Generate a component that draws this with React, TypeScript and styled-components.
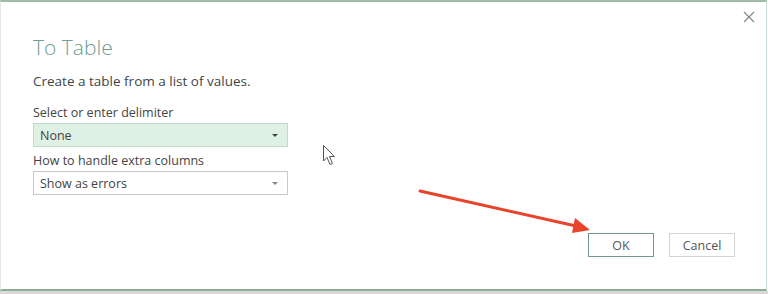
import styled, { createGlobalStyle } from "styled-components";

const GlobalStyle = createGlobalStyle`
  html, body {
    margin: 0;
    padding: 0;
    background: #f2f2f2;
  }
  body {
    font-family: "Open Sans", "Noto Sans", sans-serif;
    color: #444;
  }
`;

const Page = styled.div`
  width: 768px;
  height: 294px;
  overflow: hidden;
  background: linear-gradient(#fff 0, #fff 291px, #d9d9d9 291px);
`;

const Dialog = styled.div`
  position: relative;
  box-sizing: border-box;
  width: 767px;
  height: 291px;
  background: #fff;
  border-top: 2px solid #9dbba6;
  border-bottom: 2px solid #8fae99;
  border-right: 1px solid #c9ddd0;
  border-left: 1px solid #e6e6e6;
  display: flex;
  flex-direction: column;
  padding: 0 0 0 32px;
`;

const Close = styled.button`
  position: absolute;
  top: 8px;
  right: 10px;
  width: 14px;
  height: 14px;
  padding: 0;
  border: none;
  background: none;
  display: flex;
  align-items: center;
  justify-content: center;
`;

const Title = styled.h1`
  margin: 32px 0 0 0;
  font-family: "Open Sans", "Noto Sans", sans-serif;
  font-weight: 300;
  font-size: 21px;
  line-height: 26px;
  color: #6f9c93;
`;

const Description = styled.p`
  margin: 12px 0 0 0;
  font-size: 13.5px;
  line-height: 18px;
  color: #444;
`;

const Field = styled.div<{ $top: number }>`
  display: flex;
  flex-direction: column;
  gap: 2px;
  width: 255px;
  margin-top: ${(p) => p.$top}px;
`;

const Label = styled.label`
  font-size: 12.5px;
  line-height: 16px;
  color: #444;
`;

const Select = styled.div<{ $active?: boolean }>`
  box-sizing: border-box;
  height: 24px;
  display: flex;
  align-items: center;
  justify-content: space-between;
  padding: 0 9px 0 6px;
  font-size: 12.5px;
  color: #444;
  background: ${(p) => (p.$active ? "#dff0e4" : "#fff")};
  border: 1px solid ${(p) => (p.$active ? "#bcdcc6" : "#c8c8c8")};
`;

const Caret = styled.span<{ $active?: boolean }>`
  width: 0;
  height: 0;
  border-left: 3px solid transparent;
  border-right: 3px solid transparent;
  border-top: 3px solid ${(p) => (p.$active ? "#444" : "#888")};
`;

const Footer = styled.div`
  margin-top: auto;
  margin-bottom: 32px;
  display: flex;
  justify-content: flex-end;
  gap: 15px;
  padding-right: 31px;
`;

const Button = styled.button<{ $primary?: boolean }>`
  box-sizing: border-box;
  width: 66px;
  height: 24px;
  background: #fff;
  font-family: "Open Sans", "Noto Sans", sans-serif;
  font-size: 12.5px;
  color: #555;
  border: 1px solid ${(p) => (p.$primary ? "#6f9b84" : "#d4d4d4")};
  padding: 0;
`;

const Overlay = styled.svg`
  position: absolute;
  left: 0;
  top: 0;
  pointer-events: none;
`;

export default function App() {
  return (
    <>
      <GlobalStyle />
      <Page>
        <Dialog>
          <Close aria-label="Close">
            <svg width="12" height="12" viewBox="0 0 12 12">
              <path d="M1 1L11 11M11 1L1 11" stroke="#8a8a8a" strokeWidth="1.3" />
            </svg>
          </Close>
          <Title>To Table</Title>
          <Description>Create a table from a list of values.</Description>
          <Field $top={15}>
            <Label>Select or enter delimiter</Label>
            <Select $active>
              None
              <Caret $active />
            </Select>
          </Field>
          <Field $top={6}>
            <Label>How to handle extra columns</Label>
            <Select>
              Show as errors
              <Caret />
            </Select>
          </Field>
          <Footer>
            <Button $primary>OK</Button>
            <Button>Cancel</Button>
          </Footer>
          <Overlay width="767" height="291" viewBox="0 0 767 291">
            <path
              d="M321.5 141.5 L321.5 157 L325 153.5 L328 160.5 L330.5 159.5 L327.5 152.5 L332.5 152.5 Z"
              fill="#fff"
              stroke="#555"
              strokeWidth="1"
              strokeLinejoin="round"
              transform="translate(1,2)"
            />
            <line x1="419" y1="189" x2="575" y2="224" stroke="#e8432b" strokeWidth="3" strokeLinecap="round" />
            <path d="M589 228 L571 231 L574 216 Z" fill="#e8432b" />
          </Overlay>
        </Dialog>
      </Page>
    </>
  );
}
